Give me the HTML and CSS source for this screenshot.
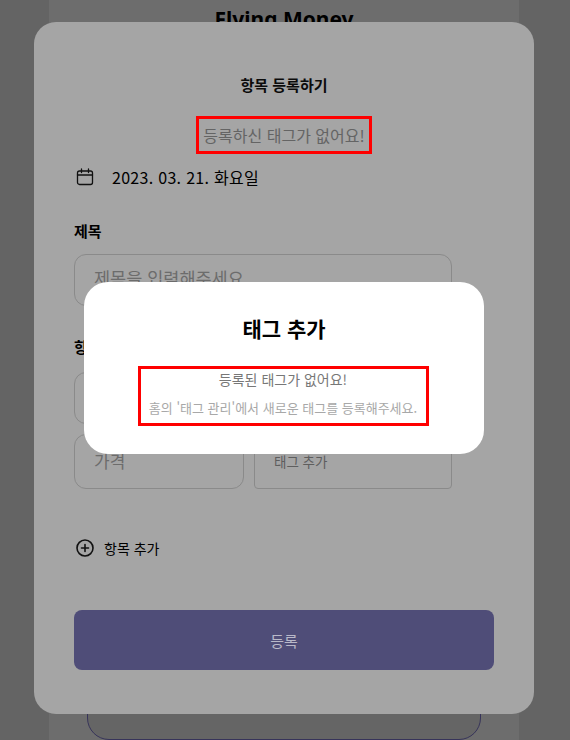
FILE: index.html
```html
<!DOCTYPE html>
<html lang="ko">
<head>
<meta charset="utf-8">
<title>Flying Money</title>
<link rel="stylesheet" href="styles.css">
</head>
<body>
<div class="stage">
  <main class="app">
    <h1 class="brand">Flying Money</h1>
    <div class="app-spacer"></div>
    <div class="app-action"></div>
  </main>

  <section class="sheet">
    <h2 class="sheet-title">항목 등록하기</h2>
    <p class="notice">등록하신 태그가 없어요!</p>
    <div class="date-row">
      <svg class="icon" viewBox="0 0 18 18" aria-hidden="true"><rect x="1.5" y="3" width="15" height="13.5" rx="2"/><path d="M1.5 7h15M5.5 1v3.5M12.5 1v3.5"/></svg>
      <span>2023. 03. 21. 화요일</span>
    </div>
    <h3 class="label label-title">제목</h3>
    <div class="field field-wide field-title placeholder">제목을 입력해주세요</div>
    <h3 class="label label-item">항목</h3>
    <div class="field field-wide field-name placeholder"></div>
    <div class="pair">
      <div class="field field-price placeholder">가격</div>
      <div class="field field-tag">태그 추가</div>
    </div>
    <div class="add-row">
      <svg class="icon icon-bold" viewBox="0 0 18 18" aria-hidden="true"><circle cx="9" cy="9" r="8"/><path d="M9 5.5v7M5.5 9h7"/></svg>
      <span>항목 추가</span>
    </div>
    <button class="submit" type="button">등록</button>
  </section>

  <section class="dialog">
    <h2 class="dialog-title">태그 추가</h2>
    <div class="empty">
      <p class="empty-main">등록된 태그가 없어요!</p>
      <p class="empty-sub">홈의 '태그 관리'에서 새로운 태그를 등록해주세요.</p>
    </div>
  </section>
</div>
</body>
</html>
```
FILE: styles.css
```css
* { box-sizing: border-box; }
html, body { margin: 0; padding: 0; }
body {
  background: #646464;
  font-family: "Noto Sans CJK KR", "Noto Sans", sans-serif;
  color: #000;
  overflow: hidden;
}
h1, h2, h3, p { margin: 0; }

.stage {
  position: relative;
  width: 568px;
  height: 740px;
  overflow: hidden;
}

.app {
  width: 470px;
  height: 740px;
  margin: 0 auto;
  background: #6d6d6d;
  display: flex;
  flex-direction: column;
  align-items: center;
}
.brand {
  margin-top: 5px;
  font-size: 21px;
  line-height: 28px;
  font-weight: 700;
  font-family: "Noto Sans", sans-serif;
  color: #000;
}
.app-spacer { flex: 1; }
.app-action {
  width: 394px;
  height: 60px;
  margin-bottom: 0;
  background: #656565;
  border: 1px solid #37345a;
  border-radius: 22px;
}

.sheet {
  position: absolute;
  left: 34px;
  top: 22px;
  width: 500px;
  height: 692px;
  padding: 50px 40px 0;
  background: #a5a5a5;
  border-radius: 22px;
  display: flex;
  flex-direction: column;
  align-items: flex-start;
}
.sheet-title {
  align-self: center;
  font-size: 15px;
  line-height: 26px;
  font-weight: 700;
  color: #0b0b0b;
}
.notice {
  align-self: center;
  width: 176px;
  height: 38px;
  margin-top: 18px;
  border: 3px solid #f00;
  font-size: 16px;
  line-height: 32px;
  text-align: center;
  white-space: nowrap;
  color: #646464;
}
.date-row {
  display: flex;
  align-items: center;
  gap: 18px;
  margin-top: 10px;
  padding-left: 2px;
  height: 26px;
  font-size: 16px;
  letter-spacing: 0.3px;
  color: #000;
}
.icon {
  width: 18px;
  height: 18px;
  flex: none;
  fill: none;
  stroke: #111;
  stroke-width: 1.3;
  stroke-linecap: round;
}
.icon-bold { stroke-width: 1.6; }
.label {
  font-size: 15px;
  line-height: 22px;
  font-weight: 700;
  color: #000;
}
.label-title { margin-top: 30px; }
.label-item { margin-top: 30px; }

.field {
  border: 1px solid #8a8a8a;
  border-radius: 12px;
  height: 52px;
  padding: 0 19px;
  display: flex;
  align-items: center;
}
.placeholder { font-size: 17.5px; color: #6c6c6c; }
.field-wide { width: 378px; margin-top: 12px; }
.field-title { padding-bottom: 5px; }
.field-name { margin-top: 14px; }
.pair {
  display: flex;
  gap: 10px;
  margin-top: 10px;
}
.field-price { width: 170px; height: 55px; font-size: 17px; padding-bottom: 2px; }
.field-tag {
  width: 198px;
  height: 55px;
  border-radius: 4px;
  font-size: 13.5px;
  padding-bottom: 2px;
  color: #5e5e5e;
}

.add-row {
  display: flex;
  align-items: center;
  gap: 10px;
  margin-top: 48px;
  padding-left: 2px;
  height: 22px;
  font-size: 14px;
  color: #000;
}
.submit {
  width: 420px;
  height: 60px;
  margin-top: 51px;
  border: 0;
  border-radius: 8px;
  background: #4f4d78;
  color: #b9b9c9;
  font-family: inherit;
  font-size: 15px;
}

.dialog {
  position: absolute;
  left: 84px;
  top: 282px;
  width: 400px;
  height: 172px;
  padding-top: 31px;
  background: #fff;
  border-radius: 24px;
  display: flex;
  flex-direction: column;
  align-items: center;
}
.dialog-title {
  font-size: 21px;
  line-height: 30px;
  font-weight: 700;
  color: #000;
}
.empty {
  width: 291px;
  height: 60px;
  margin-top: 23px;
  margin-left: -2px;
  border: 3px solid #f00;
  text-align: center;
  white-space: nowrap;
}
.empty-main {
  font-size: 14px;
  line-height: 20px;
  color: #777;
}
.empty-sub {
  margin-top: 9px;
  font-size: 13px;
  line-height: 20px;
  color: #a8a8a8;
}
```
